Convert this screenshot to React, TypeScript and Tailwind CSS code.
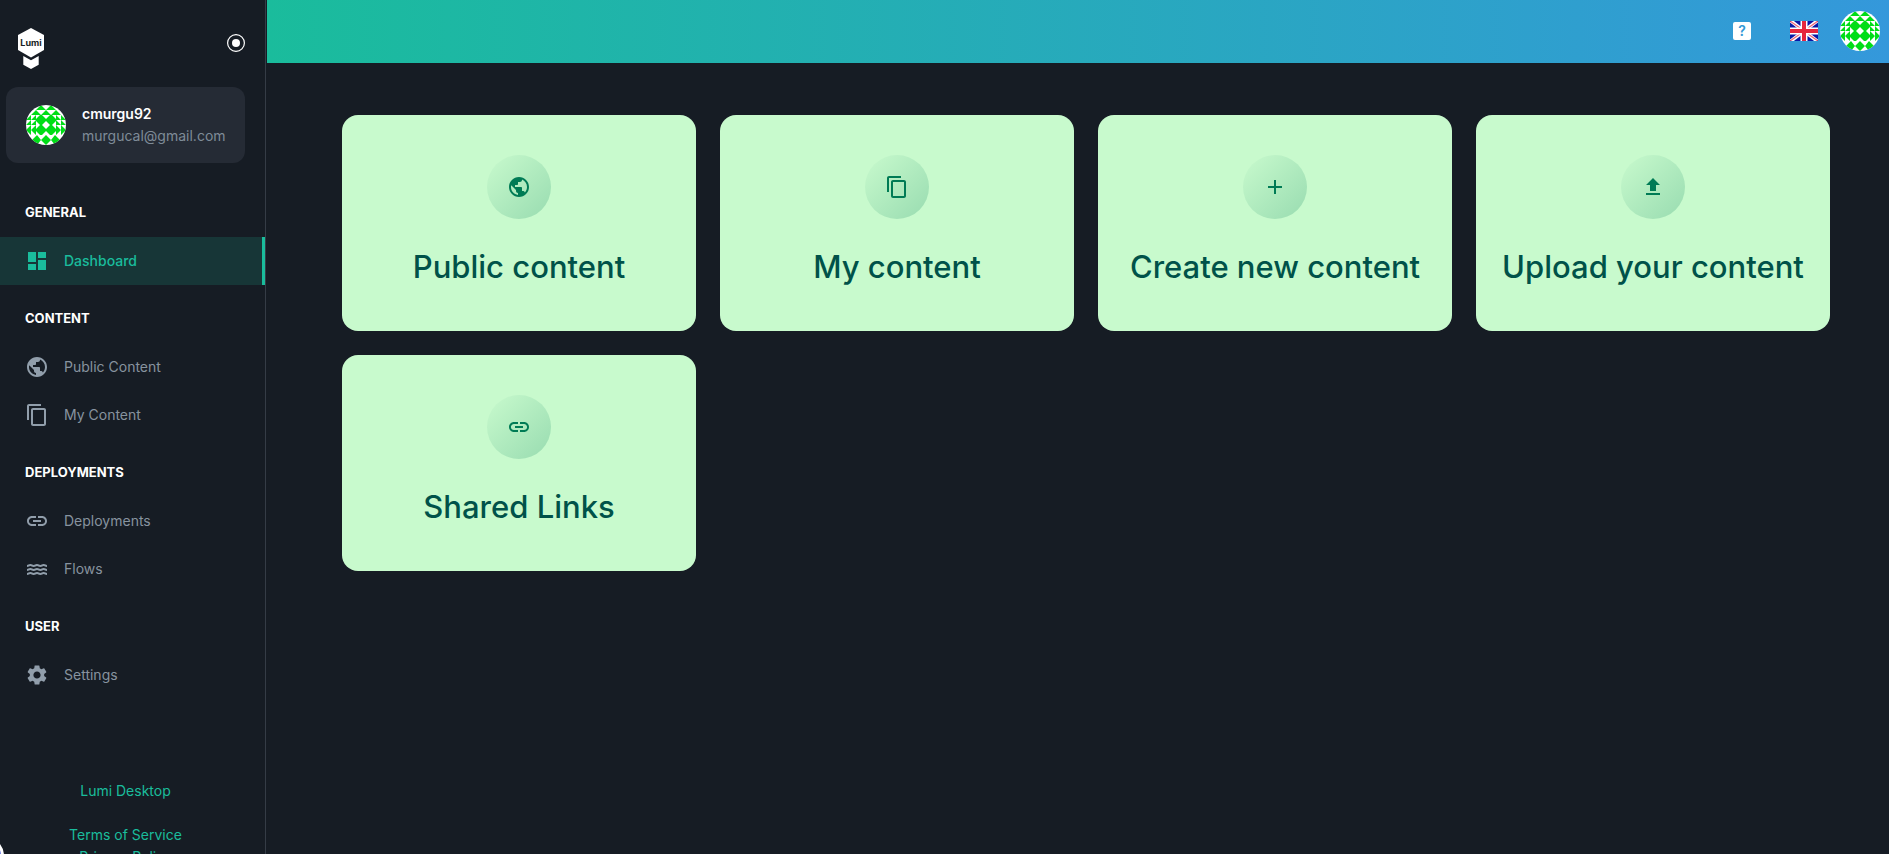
import type { IconType } from 'react-icons';
import {
  MdAdd,
  MdContentCopy,
  MdDashboard,
  MdFileUpload,
  MdLink,
  MdPublic,
  MdSettings,
  MdWater,
} from 'react-icons/md';

type NavItem = { label: string; icon: IconType; active?: boolean };

const sections: { title: string; items: NavItem[] }[] = [
  { title: 'General', items: [{ label: 'Dashboard', icon: MdDashboard, active: true }] },
  {
    title: 'Content',
    items: [
      { label: 'Public Content', icon: MdPublic },
      { label: 'My Content', icon: MdContentCopy },
    ],
  },
  {
    title: 'Deployments',
    items: [
      { label: 'Deployments', icon: MdLink },
      { label: 'Flows', icon: MdWater },
    ],
  },
  { title: 'User', items: [{ label: 'Settings', icon: MdSettings }] },
];

const cards: { title: string; icon: IconType }[] = [
  { title: 'Public content', icon: MdPublic },
  { title: 'My content', icon: MdContentCopy },
  { title: 'Create new content', icon: MdAdd },
  { title: 'Upload your content', icon: MdFileUpload },
  { title: 'Shared Links', icon: MdLink },
];

function Logo() {
  return (
    <svg viewBox="0 0 26 41" className="h-[41px] w-[26px]" role="img" aria-label="Lumi">
      <path d="M13 0 26 7v15l-13 7.500L0 22V7z" fill="#fff" />
      <path d="M5.300 28 13 32.300 20.700 28v8.700L13 41l-7.700-4.300z" fill="#fff" />
      <text x="13" y="18" textAnchor="middle" fontSize="9" fontWeight="700" fill="#161c24">
        Lumi
      </text>
    </svg>
  );
}

function Identicon() {
  return (
    <svg viewBox="0 0 40 40" className="size-10 shrink-0 rounded-full bg-white" aria-hidden="true">
      <g fill="#00dd17">
        {/* centre diamonds */}
        <path d="M14 10h2l4 4v2l-4 4h-2l-4-4v-2zM24 10h2l4 4v2l-4 4h-2l-4-4v-2z" />
        <path d="M14 20h2l4 4v2l-4 4h-2l-4-4v-2zM24 20h2l4 4v2l-4 4h-2l-4-4v-2z" />
        {/* top */}
        <path d="M15 0l5 5H10zM25 0l5 5H20zM10 5l5 5H5zM20 5l5 5H15zM30 5l5 5H25z" />
        {/* left and right */}
        <path d="M5 10v5H0zM10 10v5H5zM5 15v5H0zM10 15v5H5zM5 20v5H0zM10 20v5H5zM0 25h5v5zM5 25h5v5z" />
        <path d="M35 10v5h5zM30 10v5h5zM35 15v5h5zM30 15v5h5zM35 20v5h5zM30 20v5h5zM40 25h-5v5zM35 25h-5v5z" />
        {/* bottom */}
        <path d="M20 30l5 5-5 5-5-5zM11 30l4 5-4 5-5-5zM29 30l5 5-5 5-4-5z" />
      </g>
    </svg>
  );
}

function FlagUK() {
  return (
    <svg viewBox="0 0 28 20" className="h-5 w-7" aria-hidden="true">
      <rect width="28" height="20" rx="1" fill="#0a17a7" />
      <path d="M1 0 27 20M27 0 1 20" stroke="#fff" strokeWidth="3.500" />
      <path d="M0 0 10 7M28 0 18 7M0 20l10-7M28 20l-10-7" stroke="#e6273e" strokeOpacity=".7" strokeWidth="1.300" />
      <path d="M14 0v20M0 10h28" stroke="#fff" strokeWidth="7" />
      <path d="M14 0v20M0 10h28" stroke="#e6273e" strokeWidth="4" />
    </svg>
  );
}

function Sidebar() {
  return (
    <aside className="flex w-[266px] shrink-0 flex-col overflow-hidden border-r border-[#353c46]">
      <div className="flex shrink-0 items-start justify-between pt-7 pr-5 pl-[18px]">
        <a href="#">
          <Logo />
        </a>
        <button type="button" aria-label="Collapse menu" className="mt-[6px]">
          <svg viewBox="0 0 18 18" className="size-[18px]">
            <circle cx="9" cy="9" r="8.400" fill="none" stroke="#fff" strokeWidth="1.200" />
            <circle cx="9" cy="9" r="4" fill="#fff" />
          </svg>
        </button>
      </div>

      <a href="#" className="mt-[18px] mr-5 ml-[6px] flex items-center gap-4 rounded-xl bg-[#252b35] px-5 py-4">
        <Identicon />
        <div className="text-sm leading-[22px]">
          <p className="font-semibold text-white">cmurgu92</p>
          <p className="text-[#7f8b98]">murgucal@gmail.com</p>
        </div>
      </a>

      <nav className="mt-4">
        {sections.map((section) => (
          <div key={section.title}>
            <h2 className="px-[25px] pt-5 pb-3 text-[13px] leading-[26px] font-bold text-white uppercase">
              {section.title}
            </h2>
            {section.items.map((item) => (
              <a
                key={item.label}
                href="#"
                className={
                  item.active
                    ? 'flex h-12 items-center gap-[15px] border-r-3 border-[#1abc9c] bg-[#173637] pl-[25px] text-sm font-medium text-[#1abc9c]'
                    : 'flex h-12 items-center gap-[15px] pl-[25px] text-sm text-[#87939f]'
                }
              >
                <item.icon className={item.active ? 'size-6' : 'size-6 text-[#919eab]'} />
                {item.label}
              </a>
            ))}
          </div>
        ))}
      </nav>

      <div className="mt-[81px] mr-[14px] flex flex-col items-center text-sm leading-[22px] text-[#1abc9c]">
        <a href="#" className="mb-[22px]">Lumi Desktop</a>
        <a href="#">Terms of Service</a>
        <a href="#">Privacy Policy</a>
      </div>
    </aside>
  );
}

export default function App() {
  return (
    <div className="relative flex h-screen overflow-hidden bg-[#161c24] font-['Inter',sans-serif]">
      <Sidebar />

      <div className="ml-px flex min-w-0 flex-1 flex-col">
        <header className="flex h-[63px] shrink-0 items-center justify-end bg-[linear-gradient(90deg,#1abc9c,#3498db)] pr-[9px] pb-px">
          <button
            type="button"
            aria-label="Help"
            className="mr-[39px] flex size-[18px] items-center justify-center rounded-xs bg-white text-sm leading-none font-semibold text-[#3399d6]"
          >
            ?
          </button>
          <button type="button" aria-label="Language" className="mr-[22px]">
            <FlagUK />
          </button>
          <button type="button" aria-label="Account">
            <Identicon />
          </button>
        </header>

        <main className="grid grid-cols-4 gap-6 pt-[52px] pr-[59px] pl-[75px]">
          {cards.map((card) => (
            <a
              key={card.title}
              href="#"
              className="flex flex-col items-center rounded-2xl bg-[#c8facd] py-10 text-[#005249]"
            >
              <span className="mb-6 flex size-16 items-center justify-center rounded-full bg-[linear-gradient(135deg,rgba(0,123,85,0),rgba(0,123,85,0.24))] text-[#007b55]">
                <card.icon className="size-6" />
              </span>
              <h3 className="text-[31px] leading-[48px] font-medium whitespace-nowrap">{card.title}</h3>
            </a>
          ))}
        </main>
      </div>

      {/* loader bubble peeking out of the corner */}
      <div className="absolute -bottom-[22px] -left-9 size-10 rounded-full border-3 border-white bg-[#5b6be0]" />
    </div>
  );
}
